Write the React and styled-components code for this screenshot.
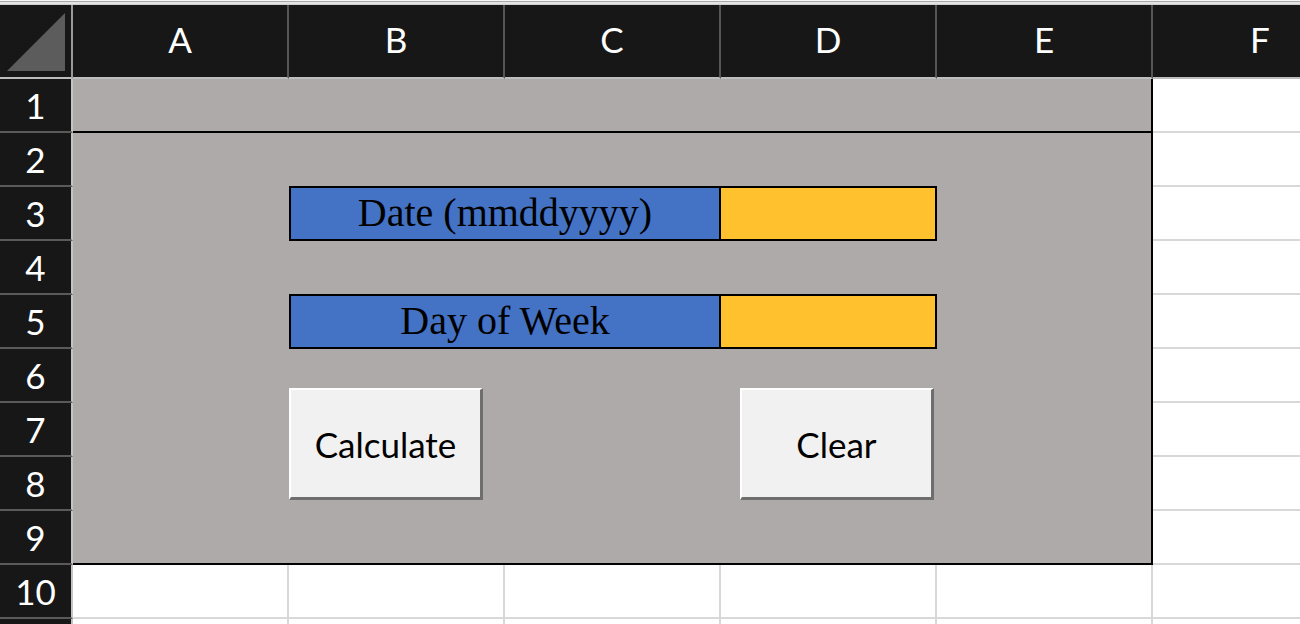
import React from 'react';
import styled, { createGlobalStyle } from 'styled-components';

const GlobalStyle = createGlobalStyle`
    html, body {
        margin: 0;
        padding: 0;
        background: #ffffff;
        overflow: hidden;
    }
    * {
        box-sizing: border-box;
    }
`

const Page = styled.div`
    width: 1300px;
    height: 624px;
    overflow: hidden;
    display: flex;
    flex-direction: column;
`

const TopStrip = styled.div`
    height: 5px;
    flex-shrink: 0;
    background: #e4e4e4;
    border-top: 1px solid #f6f6f6;
    border-bottom: 1px solid #cfcfcf;
    box-shadow: inset 0 1px 0 #a9a9a9;
`

const Sheet = styled.div`
    display: grid;
    grid-template-columns: 73px repeat(6, 216px);
    grid-template-rows: 74px repeat(11, 54px);
    font-family: Lato, "Liberation Sans", sans-serif;
`

const Corner = styled.div`
    grid-column: 1;
    grid-row: 1;
    background: #171717;
    border-right: 2px solid #9a9a9a;
    border-bottom: 2px solid #bdbdbd;
    display: flex;
    align-items: flex-end;
    justify-content: flex-end;
    padding: 0 4px 4px 0;
`

const ColHeader = styled.div`
    grid-row: 1;
    background: #171717;
    color: #ffffff;
    font-size: 35px;
    display: flex;
    align-items: center;
    justify-content: center;
    padding-bottom: 4px;
    border-right: 2px solid #555555;
    border-bottom: 2px solid #bdbdbd;
`

const RowHeader = styled.div`
    grid-column: 1;
    background: #171717;
    color: #ffffff;
    font-size: 35px;
    display: flex;
    align-items: center;
    justify-content: center;
    border-right: 2px solid #c4c4c4;
    border-bottom: 2px solid #5a5a5a;
`

const Cell = styled.div`
    background: #ffffff;
    border-right: 2px solid #d8d8d8;
    border-bottom: 2px solid #d8d8d8;
`

const Panel = styled.div`
    grid-column: 2 / 7;
    grid-row: 2 / 11;
    background: #aeaaaa;
    border-right: 2px solid #000000;
    border-bottom: 2px solid #000000;
    display: grid;
    grid-template-columns: repeat(4, 216px) 1fr;
    grid-template-rows: repeat(8, 54px) 1fr;
`

const TitleBand = styled.div`
    grid-column: 1 / -1;
    grid-row: 1;
    border-bottom: 2px solid #000000;
`

const Label = styled.div`
    grid-column: 2 / 4;
    grid-row: ${p => p.row};
    margin-top: -1px;
    background: #4472c4;
    border: 2px solid #000000;
    color: #000000;
    font-family: "Liberation Serif", "Times New Roman", serif;
    font-size: 40px;
    display: flex;
    align-items: center;
    justify-content: center;
    padding-bottom: 2px;
`

const Value = styled.div`
    grid-column: 4 / 5;
    grid-row: ${p => p.row};
    margin-top: -1px;
    background: #ffc12e;
    border: 2px solid #000000;
    border-left: none;
`

const Button = styled.button`
    grid-column: ${p => p.col};
    grid-row: 6 / 9;
    align-self: end;
    justify-self: start;
    margin-bottom: 11px;
    margin-left: ${p => p.offset || 0}px;
    width: 194px;
    height: 112px;
    background: #f1f1f1;
    border-top: 2px solid #ffffff;
    border-left: 2px solid #ffffff;
    border-right: 3px solid #6e6e6e;
    border-bottom: 3px solid #6e6e6e;
    font-family: Lato, "Liberation Sans", sans-serif;
    font-size: 35px;
    color: #000000;
    padding: 0;
    cursor: pointer;
`

const columns = ['A', 'B', 'C', 'D', 'E', 'F'];
const rows = [1, 2, 3, 4, 5, 6, 7, 8, 9, 10, 11];

class App extends React.Component {
    render() {
        return (
            <Page>
                <GlobalStyle />
                <TopStrip />
                <Sheet>
                    <Corner>
                        <svg width="62" height="62" viewBox="0 0 62 62">
                            <polygon points="2,60 60,2 60,60" fill="#5c5c5c" />
                        </svg>
                    </Corner>
                    {columns.map((c, i) => (
                        <ColHeader key={c} style={{ gridColumn: i + 2 }}>{c}</ColHeader>
                    ))}
                    {rows.map(r => (
                        <React.Fragment key={r}>
                            <RowHeader style={{ gridRow: r + 1 }}>{r < 11 ? r : ''}</RowHeader>
                            {columns.map((c, i) => (
                                <Cell key={c} style={{ gridRow: r + 1, gridColumn: i + 2 }} />
                            ))}
                        </React.Fragment>
                    ))}
                    <Panel>
                        <TitleBand />
                        <Label row={3}>Date (mmddyyyy)</Label>
                        <Value row={3} />
                        <Label row={5}>Day of Week</Label>
                        <Value row={5} />
                        <Button col={2}>Calculate</Button>
                        <Button col={4} offset={19}>Clear</Button>
                    </Panel>
                </Sheet>
            </Page>
        );
    }
}

export default App;
